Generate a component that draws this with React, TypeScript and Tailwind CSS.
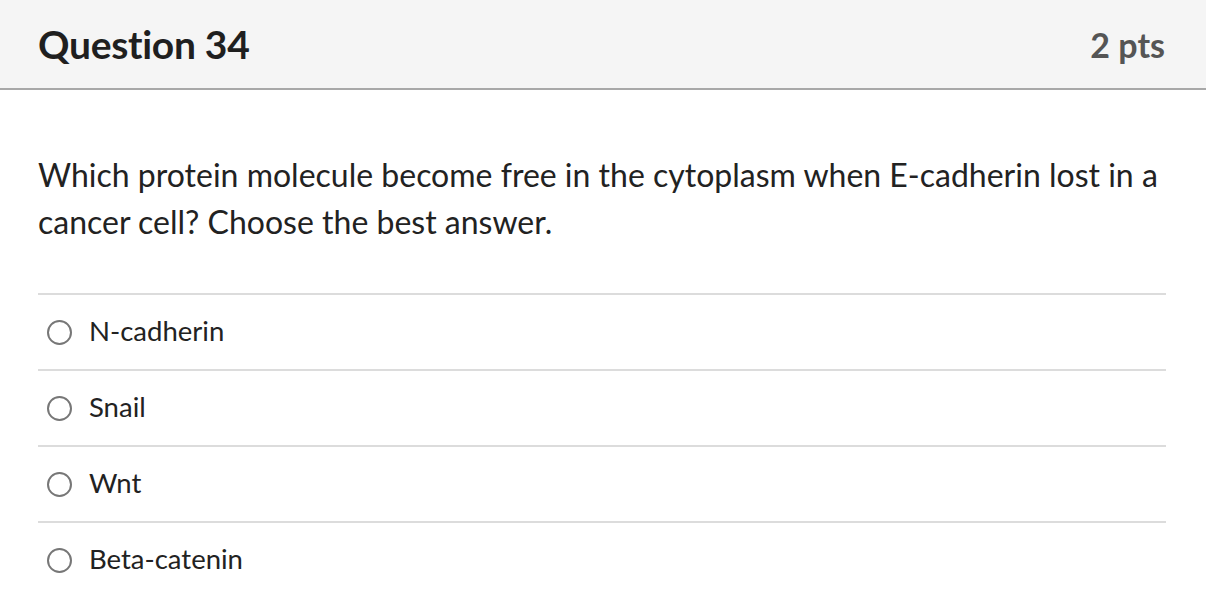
import React from 'react'

const answers = ['N-cadherin', 'Snail', 'Wnt', 'Beta-catenin']

export default function App() {
  return (
    <div className="h-[606px] w-[1206px] overflow-hidden bg-white font-['Lato','Liberation_Sans',sans-serif] text-[#222]">
      <div className="flex h-[90px] items-center justify-between border-b-2 border-[#a8a8a8] bg-[#f5f5f5] pl-[38px] pr-[41px]">
        <h2 className="text-[39px] font-bold tracking-[-0.3px] text-[#1f1f1f]">Question 34</h2>
        <div className="text-[34px] font-bold text-[#555]">2 pts</div>
      </div>

      <div className="px-[38px] pr-[40px]">
        <p className="mt-[61px] text-[32px] leading-[47px]">
          Which protein molecule become free in the cytoplasm when E-cadherin lost in a cancer cell? Choose the best
          answer.
        </p>

        <div className="mt-[48px]">
          {answers.map((a) => (
            <label key={a} className="flex h-[76px] items-center border-t-2 border-[#dcdcdc] pl-[9px]">
              <span className="h-[25px] w-[25px] rounded-full border-2 border-[#777] bg-white" />
              <span className="ml-[17px] -mt-[3px] text-[27.5px]">{a}</span>
            </label>
          ))}
        </div>
      </div>
    </div>
  )
}
